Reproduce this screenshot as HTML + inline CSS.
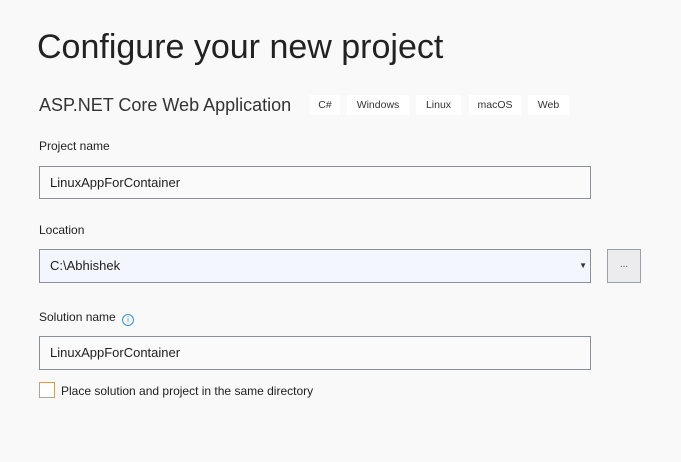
<!DOCTYPE html>
<html><head><style>
body{margin:0;width:681px;height:462px;background:#f9f9f9;font-family:"Liberation Sans",sans-serif;color:#1e1e1e;position:relative;overflow:hidden}
.a{position:absolute;white-space:nowrap}
.tag{position:absolute;top:95px;height:20px;background:#fff;font-size:10.5px;line-height:20px;text-align:center;color:#333}
.box{position:absolute;left:39px;width:552px;border:1px solid #8a8f99;background:#fafafa;font-size:13px;box-sizing:border-box;padding-left:10px}
.lbl{font-size:12px;color:#1e1e1e}
</style></head><body>
<div class="a" style="left:37px;top:28px;font-size:34px;color:#222">Configure your new project</div>
<div class="a" style="left:39px;top:95px;font-size:18px;color:#333">ASP.NET Core Web Application</div>
<div class="tag" style="left:310px;width:30px">C#</div>
<div class="tag" style="left:347px;width:62px">Windows</div>
<div class="tag" style="left:416px;width:45px">Linux</div>
<div class="tag" style="left:469px;width:52px">macOS</div>
<div class="tag" style="left:528px;width:41px">Web</div>
<div class="a lbl" style="left:39px;top:139px">Project name</div>
<div class="box" style="top:166px;height:33px;line-height:31px">LinuxAppForContainer</div>
<div class="a lbl" style="left:39px;top:223px">Location</div>
<div class="box" style="top:249px;height:34px;line-height:32px;background:#f3f6fc">C:\Abhishek<span style="position:absolute;right:3px;top:0;font-size:8px;color:#333">▼</span></div>
<div class="a" style="left:607px;top:249px;width:34px;height:34px;border:1px solid #9aa0a8;box-sizing:border-box;background:#ececef;font-size:10px;text-align:center;line-height:30px;color:#555">...</div>
<div class="a lbl" style="left:39px;top:310px">Solution name <span style="display:inline-block;width:10px;height:10px;border:1px solid #3d8ed6;border-radius:50%;font-size:8px;line-height:10px;text-align:center;color:#3d8ed6;vertical-align:-1px;margin-left:3px">i</span></div>
<div class="box" style="top:336px;height:34px;line-height:32px">LinuxAppForContainer</div>
<div class="a" style="left:39px;top:382px;width:16px;height:16px;border:1px solid #c8a070;box-sizing:border-box;background:#fff"></div>
<div class="a lbl" style="left:61px;top:384px">Place solution and project in the same directory</div>
</body></html>
